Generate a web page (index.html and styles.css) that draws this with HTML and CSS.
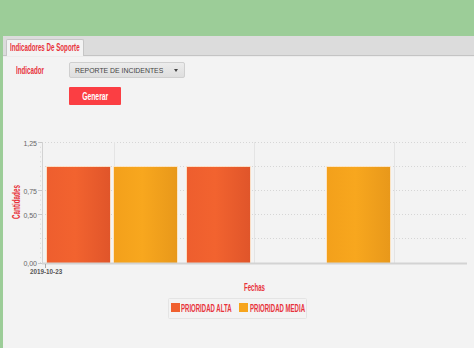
FILE: index.html
```html
<!DOCTYPE html>
<html lang="es">
<head>
<meta charset="utf-8">
<title>Indicadores De Soporte</title>
<link rel="stylesheet" href="styles.css">
</head>
<body>
<header class="topbar"></header>
<div class="main">
  <nav class="tabbar">
    <div class="tab"><span class="cond">Indicadores De Soporte</span></div>
  </nav>
  <section class="content">
    <div class="form-row">
      <label class="label"><span class="cond">Indicador</span></label>
      <div class="select"><span>REPORTE DE INCIDENTES</span><span class="caret"></span></div>
    </div>
    <div class="form-row btn-row">
      <button class="btn"><span class="cond cond-btn">Generar</span></button>
    </div>
    <div class="chart">
      <svg class="chart-svg" width="471" height="190" viewBox="3 135 471 190">
        <defs>
          <linearGradient id="gRed" x1="0" x2="1" y1="0" y2="0">
            <stop offset="0" stop-color="#ee5e2e"/>
            <stop offset="0.45" stop-color="#f2632f"/>
            <stop offset="1" stop-color="#e0552a"/>
          </linearGradient>
          <linearGradient id="gOr" x1="0" x2="1" y1="0" y2="0">
            <stop offset="0" stop-color="#f3a01b"/>
            <stop offset="0.45" stop-color="#f8a71e"/>
            <stop offset="1" stop-color="#e8981a"/>
          </linearGradient>
        </defs>
        <g class="grid-h">
          <line x1="42" x2="467" y1="142.5" y2="142.5"/>
          <line x1="42" x2="467" y1="166.5" y2="166.5"/>
          <line x1="42" x2="467" y1="190.5" y2="190.5"/>
          <line x1="42" x2="467" y1="214.5" y2="214.5"/>
          <line x1="42" x2="467" y1="238.5" y2="238.5"/>
        </g>
        <g class="grid-v">
          <line x1="114.5" x2="114.5" y1="142" y2="263"/>
          <line x1="254.5" x2="254.5" y1="142" y2="263"/>
          <line x1="394.5" x2="394.5" y1="142" y2="263"/>
        </g>
        <line class="axis-y" x1="42.5" x2="42.5" y1="142" y2="264"/>
        <line class="minor" x1="40.5" x2="40.5" y1="142" y2="264"/>
        <g class="major">
          <line x1="38" x2="42" y1="142.5" y2="142.5"/>
          <line x1="38" x2="42" y1="190.5" y2="190.5"/>
          <line x1="38" x2="42" y1="214.5" y2="214.5"/>
          <line x1="38" x2="42" y1="263.5" y2="263.5"/>
        </g>
        <g class="ylab">
          <text x="37" y="145.5">1,25</text>
          <text x="37" y="193.5">0,75</text>
          <text x="37" y="217.5">0,50</text>
          <text x="37" y="265.5">0,00</text>
        </g>
        <rect class="bar" x="46.5" y="166.5" width="64" height="97" fill="url(#gRed)"/>
        <rect class="bar" x="113.5" y="166.5" width="64" height="97" fill="url(#gOr)"/>
        <rect class="bar" x="186.5" y="166.5" width="64" height="97" fill="url(#gRed)"/>
        <rect class="bar" x="326.5" y="166.5" width="64" height="97" fill="url(#gOr)"/>
        <line class="axis-x" x1="42" x2="467" y1="263.5" y2="263.5"/>
        <line class="xtick" x1="45.5" x2="45.5" y1="264" y2="268"/>
        <text class="xlab" transform="translate(30 274) scale(0.9 1)">2019-10-23</text>
        <text class="ytitle" transform="translate(19.5 219) rotate(-90) scale(0.63 1)">Cantidades</text>
        <text class="xtitle" transform="translate(244 290.5) scale(0.61 1)">Fechas</text>
        <g class="legend">
          <rect class="legend-box" x="168.5" y="298.5" width="138" height="20" rx="1"/>
          <rect x="171" y="303" width="9" height="9" fill="#f0602f"/>
          <text class="legend-text" transform="translate(181 311.5) scale(0.55 1)">PRIORIDAD ALTA</text>
          <rect x="239" y="303" width="9" height="9" fill="#f7a51d"/>
          <text class="legend-text" transform="translate(250 311.5) scale(0.55 1)">PRIORIDAD MEDIA</text>
        </g>
      </svg>
    </div>
  </section>
</div>
</body>
</html>
```
FILE: styles.css
```css
* { box-sizing: border-box; }
html, body { margin: 0; padding: 0; }
body {
  width: 474px;
  height: 348px;
  overflow: hidden;
  background: #f3f3f3;
  font-family: "Liberation Sans", Arial, sans-serif;
}
.topbar {
  height: 36px;
  background: #9ccd98;
}
.main {
  border-left: 3px solid #9ccd98;
  height: 312px;
}
.tabbar {
  height: 20px;
  background: #dcdcdc;
  border-bottom: 1px solid #c4c4c4;
  box-shadow: 0 1px 0 #ececec;
  display: flex;
  align-items: flex-end;
  padding-left: 3px;
}
.tab {
  width: 78px;
  height: 17px;
  margin-bottom: -1px;
  background: #f3f3f3;
  border: 1px solid #c6c6c6;
  border-bottom: none;
  border-radius: 2px 2px 0 0;
  color: #e8323a;
  font-weight: bold;
  font-size: 10px;
  line-height: 16px;
  padding-left: 3px;
  white-space: nowrap;
}
.cond {
  display: inline-block;
  white-space: nowrap;
  transform: scaleX(0.62);
  transform-origin: left center;
}
.content {
  padding-top: 6px;
}
.form-row {
  display: flex;
  align-items: center;
  padding-left: 13px;
}
.label {
  width: 53px;
  color: #e8323a;
  font-weight: bold;
  font-size: 10px;
  white-space: nowrap;
}
.select {
  width: 116px;
  height: 16px;
  border: 1px solid #cfcfcf;
  border-radius: 2px;
  background: linear-gradient(#ececec, #dedede);
  display: flex;
  align-items: center;
  justify-content: space-between;
  padding: 0 6px 0 5px;
  color: #444;
  font-size: 6.9px;
  white-space: nowrap;
}
.caret {
  width: 0;
  height: 0;
  border-left: 2.5px solid transparent;
  border-right: 2.5px solid transparent;
  border-top: 3px solid #444;
}
.btn-row {
  padding-left: 66px;
  margin-top: 9px;
}
.btn {
  width: 52px;
  height: 18px;
  border: none;
  border-radius: 1px;
  background: #fb3e43;
  color: #fff;
  font-family: "Liberation Sans", Arial, sans-serif;
  font-weight: bold;
  font-size: 10px;
  padding: 0;
  display: flex;
  align-items: center;
  justify-content: center;
}
.cond-btn {
  transform: scaleX(0.68);
  transform-origin: center center;
}
.chart {
  margin-top: 30px;
  margin-left: -3px;
}
.chart-svg { display: block; margin-left: 3px; }
.grid-h line { stroke: #d6d6d6; stroke-width: 1; stroke-dasharray: 1 2; }
.grid-v line { stroke: #e4e4e4; stroke-width: 1; }
.axis-y { stroke: #d2d2d2; stroke-width: 1; }
.minor { stroke: #d8d8d8; stroke-width: 1; stroke-dasharray: 1 3.8; }
.major line { stroke: #c8c8c8; stroke-width: 1; }
.axis-x { stroke: #d3d3d3; stroke-width: 2; }
.xtick { stroke: #aaa; stroke-width: 1; }
.bar { stroke: rgba(255, 235, 210, 0.8); stroke-width: 1; }
.ylab text {
  font-family: "Liberation Sans", Arial, sans-serif;
  font-size: 7px;
  fill: #666;
  text-anchor: end;
}
.xlab {
  font-family: "Liberation Sans", Arial, sans-serif;
  font-size: 7px;
  font-weight: bold;
  fill: #555;
}
.ytitle, .xtitle {
  font-family: "Liberation Sans", Arial, sans-serif;
  font-weight: bold;
  font-size: 10px;
  fill: #e8323a;
}
.legend-text {
  font-family: "Liberation Sans", Arial, sans-serif;
  font-weight: bold;
  font-size: 11px;
  fill: #e8323a;
}
.legend-box { fill: none; stroke: #e4e4e4; stroke-width: 1; }
```
